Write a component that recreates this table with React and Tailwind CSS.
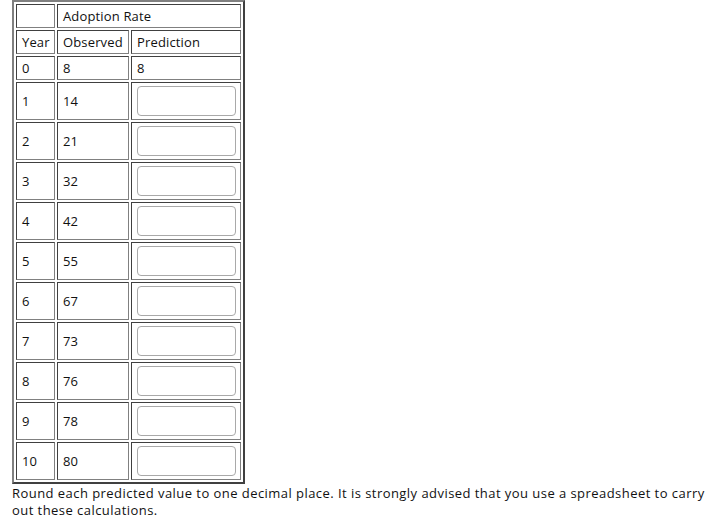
const rows = [
  [1, 14],
  [2, 21],
  [3, 32],
  [4, 42],
  [5, 55],
  [6, 67],
  [7, 73],
  [8, 76],
  [9, 78],
  [10, 80],
];

const cell =
  "border border-t-[#404040] border-l-[#404040] border-b-[#808080] border-r-[#808080] px-[5px] py-[3px] align-middle whitespace-nowrap";

export default function App() {
  return (
    <div
      className="min-h-screen bg-white pl-[12px] text-[13px] leading-[16px] text-[#111]"
      style={{ fontFamily: '"Open Sans", "DejaVu Sans", sans-serif' }}
    >
      <table className="w-[233px] table-fixed border-separate border-spacing-[2px] border-2 border-t-[#808080] border-l-[#808080] border-b-[#404040] border-r-[#404040] tracking-[0.15px]">
        <colgroup>
          <col className="w-[39px]" />
          <col className="w-[72px]" />
          <col className="w-[110px]" />
        </colgroup>
        <tbody>
          <tr>
            <td className={cell}></td>
            <td className={cell} colSpan={2}>
              Adoption Rate
            </td>
          </tr>
          <tr>
            <td className={cell}>Year</td>
            <td className={cell}>Observed</td>
            <td className={cell}>Prediction</td>
          </tr>
          <tr>
            <td className={cell}>0</td>
            <td className={cell}>8</td>
            <td className={cell}>8</td>
          </tr>
          {rows.map(([year, observed]) => (
            <tr key={year}>
              <td className={cell}>{year}</td>
              <td className={cell}>{observed}</td>
              <td className={cell}>
                <input
                  type="text"
                  className="block h-[30px] w-[99px] rounded-[4px] border border-[#a9a9a9] bg-white px-2 outline-none"
                />
              </td>
            </tr>
          ))}
        </tbody>
      </table>
      <p className="w-[711px] pt-[1px] leading-[17px] tracking-[0.45px]">
        Round each predicted value to one decimal place. It is strongly advised
        that you use a spreadsheet to carry out these calculations.
      </p>
    </div>
  );
}
